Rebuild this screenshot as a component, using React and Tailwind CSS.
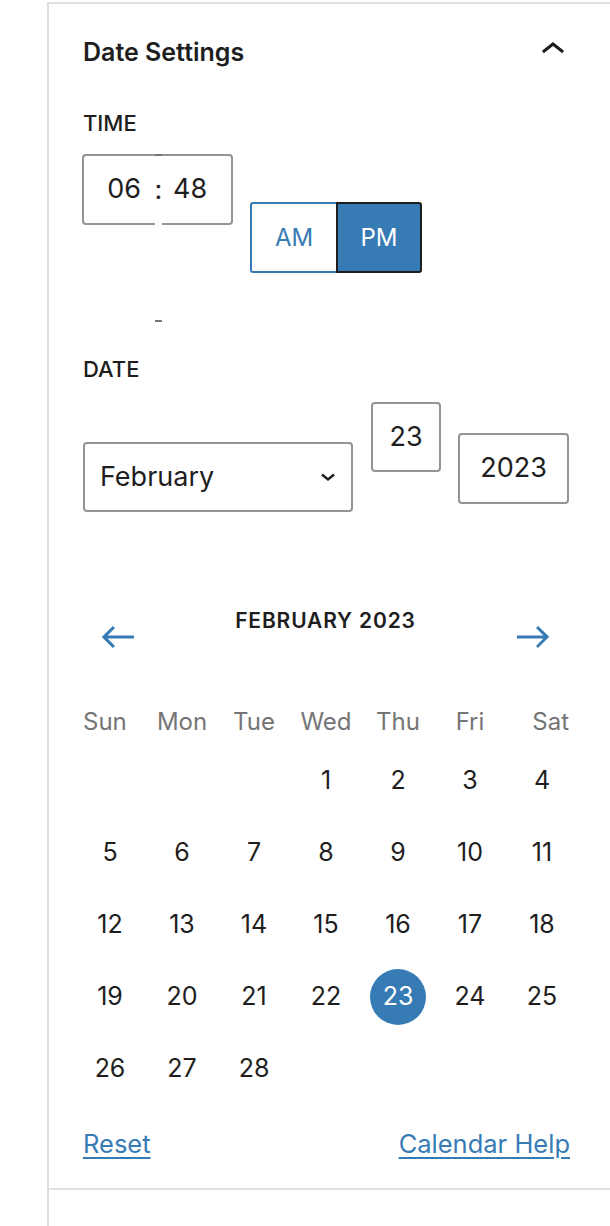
import React from "react";

const BLUE = "#377bb5";

const WEEKDAYS = ["Sun", "Mon", "Tue", "Wed", "Thu", "Fri", "Sat"];

// February 2023 starts on a Wednesday
const cells = [...Array(3).fill(null), ...Array.from({ length: 28 }, (_, i) => i + 1)];

const ChevronUp = () => (
  <svg viewBox="0 0 24 24" width="48" height="48" className="-mr-[7px]" fill="#1e1e1e">
    <path d="M6.5 12.4L12 8l5.5 4.4-.9 1.2L12 10 7.4 13.6l-.9-1.2z" />
  </svg>
);

const ArrowLeft = () => (
  <svg viewBox="0 0 24 24" width="48" height="48" fill={BLUE}>
    <path d="M20 11.2H6.8l3.7-3.7-1.1-1L3.9 12l5.5 5.5 1.1-1-3.7-3.7H20z" />
  </svg>
);

const ArrowRight = () => (
  <svg viewBox="0 0 24 24" width="48" height="48" fill={BLUE}>
    <path d="m14.5 6.5-1 1 3.7 3.7H4v1.6h13.2l-3.7 3.7 1 1 5.6-5.6z" />
  </svg>
);

const SmallChevronDown = () => (
  <svg viewBox="0 0 16 10" width="16" height="10" fill="none" stroke="#1e1e1e" strokeWidth="2.4">
    <path d="M2 2.5l6 5 6-5" />
  </svg>
);

export default function App() {
  return (
    <div className="min-h-screen bg-white font-['Inter',sans-serif] text-[#1e1e1e]">
      <div className="ml-[47px] min-h-screen border-l-2 border-[#dcdcde]">
        <div className="mt-[2px] border-y-2 border-[#e0e0e0] pl-[34px] pr-[40px]">
          {/* Panel header */}
          <div className="mt-[22px] flex items-start justify-between">
            <h2 className="mt-[10px] text-[25px] leading-[32px] font-semibold">Date Settings</h2>
            <ChevronUp />
          </div>

          {/* Time */}
          <div className="mt-[37px] h-[24px] text-[22px] leading-[24px] font-medium uppercase">Time</div>
          <div className="mt-[19px] flex items-start">
            <div className="-ml-px flex h-[71px] text-[27px]">
              <div className="flex w-[73px] items-center justify-end rounded-l-[4px] border-y-2 border-l-2 border-[#949494] pr-[14px]">
                06
              </div>
              <div className="flex w-[7px] items-center justify-center border-t-2 border-[#757575]">:</div>
              <div className="flex w-[71px] items-center rounded-r-[4px] border-y-2 border-r-2 border-[#949494] pl-[11px]">
                48
              </div>
            </div>
            <div className="mt-[48px] ml-[17px] flex h-[71px] text-[24px]">
              <button className="w-[86px] rounded-l-[3px] border-2 border-r-0 border-[#377bb5] text-[#377bb5]">
                AM
              </button>
              <button className="w-[86px] rounded-r-[3px] border-2 border-[#1e1e1e] bg-[#377bb5] text-white">
                PM
              </button>
            </div>
          </div>
          <div className="mt-[47px] ml-[72px] h-[2px] w-[7px] bg-[#757575]" />

          {/* Date */}
          <div className="mt-[35px] h-[24px] text-[22px] leading-[24px] font-medium uppercase">Date</div>
          <div className="mt-[21px] flex items-start text-[27px]">
            <div className="mt-[40px] flex h-[70px] w-[270px] items-center justify-between rounded-[4px] border-2 border-[#949494] pl-[15px] pr-[15px]">
              <span>February</span>
              <SmallChevronDown />
            </div>
            <div className="ml-[18px] flex h-[70px] w-[70px] items-center justify-center rounded-[4px] border-2 border-[#949494]">
              23
            </div>
            <div className="mt-[31px] ml-[17px] flex h-[71px] w-[111px] items-center justify-center rounded-[4px] border-2 border-[#949494]">
              2023
            </div>
          </div>

          {/* Calendar */}
          <div className="mt-[96px] flex items-start justify-between pl-[11px] pr-[13px]">
            <button className="mt-[5px]" aria-label="Previous month">
              <ArrowLeft />
            </button>
            <div className="h-[25px] text-[21px] leading-[25px] font-semibold tracking-[0.04em]">
              FEBRUARY 2023
            </div>
            <button className="mt-[5px]" aria-label="Next month">
              <ArrowRight />
            </button>
          </div>

          <div className="-ml-[9px] mt-[46px] grid w-[504px] grid-cols-7 text-[24px] leading-[30px] text-[#757575]">
            {WEEKDAYS.map((d, i) => (
              <div
                key={d}
                className={
                  i === 0 ? "pl-[9px] text-left" : i === 6 ? "pr-[9px] text-right" : "text-center"
                }
              >
                {d}
              </div>
            ))}
          </div>

          <div className="-ml-[9px] mt-[8px] grid w-[504px] grid-cols-7 text-[25px]">
            {cells.map((n, i) => (
              <div key={i} className="flex h-[72px] items-center justify-center">
                {n === 23 ? (
                  <span className="flex h-[56px] w-[56px] items-center justify-center rounded-full bg-[#377bb5] text-white">
                    23
                  </span>
                ) : (
                  n
                )}
              </div>
            ))}
          </div>

          {/* Footer links */}
          <div className="mt-[24px] mb-[29px] flex h-[30px] items-center justify-between text-[25.5px] text-[#377bb5]">
            <a href="#" className="underline decoration-2 underline-offset-[4px]">
              Reset
            </a>
            <a href="#" className="underline decoration-2 underline-offset-[4px]">
              Calendar Help
            </a>
          </div>
        </div>
      </div>
    </div>
  );
}
